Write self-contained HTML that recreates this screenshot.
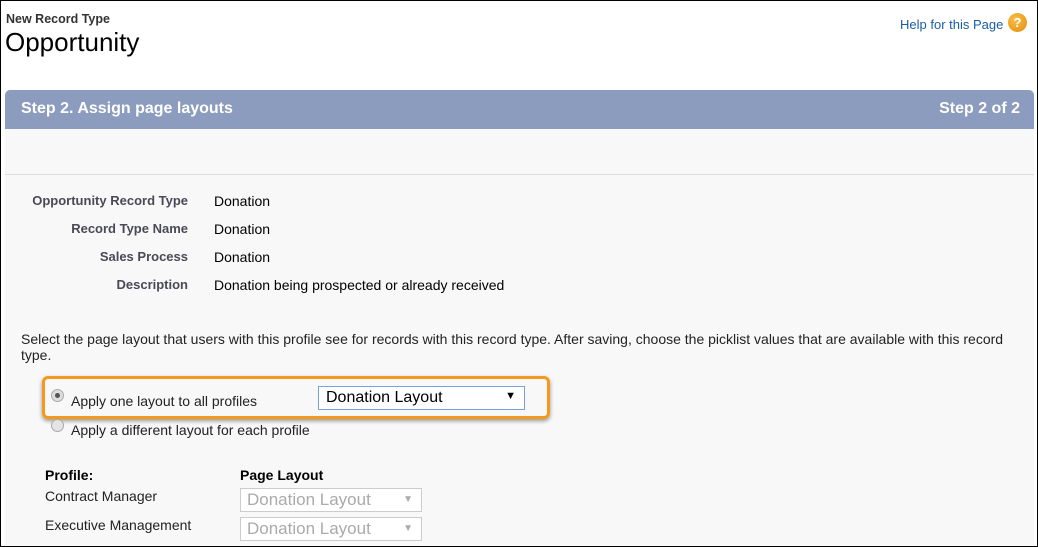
<!DOCTYPE html>
<html><head><style>
body{margin:0;width:1038px;height:547px;overflow:hidden;font-family:"Liberation Sans",Arial,sans-serif;background:#fff;}
.frame{position:absolute;left:0;top:0;width:1036px;height:545px;border:1px solid #000;overflow:hidden;}
.a{position:absolute;white-space:nowrap;}
.panel{position:absolute;left:4px;top:89px;width:1029px;height:470px;background:#f8f8f8;border-radius:5px 5px 0 0;}
.hdr{position:absolute;left:0;top:0;width:100%;height:39px;background:#8c9cbe;border-radius:5px 5px 0 0;}
.lbl{font-size:13px;font-weight:bold;color:#4a4a56;text-align:right;width:183px;left:4px;}
.val{font-size:14px;color:#000;left:213px;}
.sel{position:absolute;border:1px solid #ccc;background:#fff;width:180px;height:22px;font-size:17px;color:#aaa;}
</style></head><body>
<div class="frame">
<div class="a" style="left:5px;top:11px;font-size:12.5px;font-weight:bold;color:#333;">New Record Type</div>
<div class="a" style="left:4px;top:26px;font-size:26px;color:#000;">Opportunity</div>
<div class="a" style="left:899px;top:16px;font-size:13px;color:#1a5ea8;">Help for this Page</div>
<div class="a" style="left:1007px;top:12px;width:19px;height:19px;border-radius:50%;background:radial-gradient(circle at 40% 35%,#f9c04a,#e48a0a);color:#fff;font-size:13px;font-weight:bold;text-align:center;line-height:19px;">?</div>
<div class="panel">
<div class="hdr"></div>
<div class="a" style="left:16px;top:10px;font-size:16px;font-weight:bold;color:#fff;">Step 2. Assign page layouts</div>
<div class="a" style="right:14px;top:10px;font-size:16px;font-weight:bold;color:#fff;">Step 2 of 2</div>
<div class="a" style="left:0;top:84px;width:100%;height:1px;background:#ddd;"></div>
</div>
<div class="a lbl" style="top:192px;">Opportunity Record Type</div><div class="a val" style="top:192px;">Donation</div>
<div class="a lbl" style="top:220px;">Record Type Name</div><div class="a val" style="top:220px;">Donation</div>
<div class="a lbl" style="top:248px;">Sales Process</div><div class="a val" style="top:248px;">Donation</div>
<div class="a lbl" style="top:276px;">Description</div><div class="a val" style="top:276px;">Donation being prospected or already received</div>
<div class="a" style="left:20px;top:330px;font-size:14px;color:#222;white-space:normal;width:1005px;line-height:16px;">Select the page layout that users with this profile see for records with this record type. After saving, choose the picklist values that are available with this record type.</div>
<div class="a" style="left:41px;top:375px;width:502px;height:37px;border:3px solid #f39a1e;border-radius:6px;box-shadow:0 2px 4px rgba(0,0,0,.4);"></div>
<div class="a" style="left:50px;top:388px;width:13px;height:13px;border-radius:50%;background:#ddd;border:1px solid #aaa;box-sizing:border-box;"><div style="margin:3px;width:5px;height:5px;border-radius:50%;background:#555;"></div></div>
<div class="a" style="left:70px;top:392px;font-size:14px;color:#222;">Apply one layout to all profiles</div>
<div class="a" style="left:317px;top:385px;width:205px;height:22px;border:1px solid #7ba2d6;background:#fff;font-size:16px;color:#000;"><span style="position:absolute;left:7px;top:2px;">Donation Layout</span><span style="position:absolute;right:8px;top:3px;font-size:11px;">▼</span></div>
<div class="a" style="left:50px;top:418px;width:13px;height:13px;border-radius:50%;background:#e4e4e4;border:1px solid #aaa;box-sizing:border-box;"></div>
<div class="a" style="left:70px;top:421px;font-size:14px;color:#222;">Apply a different layout for each profile</div>
<div class="a" style="left:44px;top:466px;font-size:14px;font-weight:bold;color:#000;">Profile:</div>
<div class="a" style="left:239px;top:466px;font-size:14px;font-weight:bold;color:#000;">Page Layout</div>
<div class="a" style="left:44px;top:487px;font-size:14px;color:#222;">Contract Manager</div>
<div class="a" style="left:44px;top:516px;font-size:14px;color:#222;">Executive Management</div>
<div class="sel" style="left:239px;top:487px;"><span style="position:absolute;left:6px;top:1px;">Donation Layout</span><span style="position:absolute;right:8px;top:5px;font-size:10px;">▼</span></div>
<div class="sel" style="left:239px;top:516px;"><span style="position:absolute;left:6px;top:1px;">Donation Layout</span><span style="position:absolute;right:8px;top:5px;font-size:10px;">▼</span></div>
</div>
</body></html>
